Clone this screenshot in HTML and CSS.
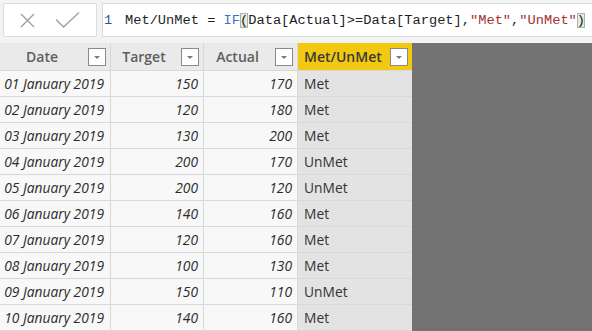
FILE: index.html
```html
<!DOCTYPE html>
<html>
<head>
<meta charset="utf-8">
<link rel="stylesheet" href="styles.css">
</head>
<body>
<div class="topbar">
  <div class="actions">
    <svg class="icon" width="15" height="15" viewBox="0 0 15 15"><path d="M1 1 L14 14 M14 1 L1 14" stroke="#a0a0a0" stroke-width="1.4" fill="none"/></svg>
    <svg class="icon" width="25" height="16" viewBox="0 0 25 16"><path d="M1 7.5 L8.5 15 L24 0.5" stroke="#a0a0a0" stroke-width="1.4" fill="none"/></svg>
  </div>
  <div class="formula">
    <span class="ln">1</span><span class="code">Met/UnMet = <span class="kw">IF</span><span class="br">(</span>Data[Actual]&gt;=Data[Target],<span class="str">"Met"</span>,<span class="str">"UnMet"</span><span class="br">)</span></span>
  </div>
</div>
<div class="main">
  <div class="grid">
    <div class="hcell"><span class="htext">Date</span><span class="dd"></span></div>
    <div class="hcell"><span class="htext">Target</span><span class="dd"></span></div>
    <div class="hcell"><span class="htext">Actual</span><span class="dd"></span></div>
    <div class="hcell sel"><span class="htext">Met/UnMet</span><span class="dd"></span></div>

    <div class="c d">01 January 2019</div><div class="c n">150</div><div class="c n">170</div><div class="c m">Met</div>
    <div class="c d">02 January 2019</div><div class="c n">120</div><div class="c n">180</div><div class="c m">Met</div>
    <div class="c d">03 January 2019</div><div class="c n">130</div><div class="c n">200</div><div class="c m">Met</div>
    <div class="c d">04 January 2019</div><div class="c n">200</div><div class="c n">170</div><div class="c m">UnMet</div>
    <div class="c d">05 January 2019</div><div class="c n">200</div><div class="c n">120</div><div class="c m">UnMet</div>
    <div class="c d">06 January 2019</div><div class="c n">140</div><div class="c n">160</div><div class="c m">Met</div>
    <div class="c d">07 January 2019</div><div class="c n">120</div><div class="c n">160</div><div class="c m">Met</div>
    <div class="c d">08 January 2019</div><div class="c n">100</div><div class="c n">130</div><div class="c m">Met</div>
    <div class="c d">09 January 2019</div><div class="c n">150</div><div class="c n">110</div><div class="c m">UnMet</div>
    <div class="c d">10 January 2019</div><div class="c n">140</div><div class="c n">160</div><div class="c m">Met</div>
  </div>
  <div class="empty"></div>
</div>
</body>
</html>
```
FILE: styles.css
```css
html, body {
  margin: 0;
  padding: 0;
  width: 592px;
  height: 331px;
  overflow: hidden;
  background: #737373;
  font-family: "Open Sans", "Noto Sans", sans-serif;
}
.topbar {
  height: 43px;
  background: #f3f3f3;
  display: flex;
  padding: 3px 0 0 3px;
  box-sizing: border-box;
  gap: 5px;
}
.actions {
  width: 94px;
  height: 34px;
  box-sizing: border-box;
  background: #fff;
  border: 1px solid #dcdcdc;
  border-radius: 2px;
  display: flex;
  align-items: center;
  padding-left: 16px;
  gap: 20px;
}
.formula {
  flex: 1;
  height: 34px;
  box-sizing: border-box;
  background: #fff;
  border: 1px solid #dcdcdc;
  border-right: none;
  display: flex;
  align-items: center;
  padding-left: 1px;
  font-family: "Liberation Mono", "DejaVu Sans Mono", monospace;
  font-size: 13.7px;
  color: #1e1e1e;
  white-space: nowrap;
}
.ln {
  color: #2b56a0;
  width: 21px;
}
.kw { color: #3d6fc6; }
.str { color: #a3312d; }
.br {
  background: #e4ebe4;
  outline: 1px solid #aab5aa;
  outline-offset: -1px;
}
.main {
  display: flex;
  height: 288px;
}
.grid {
  display: grid;
  grid-template-columns: 110px 92px 93px 114px;
  grid-template-rows: 27px repeat(10, 25px);
  gap: 1px;
  background: #d9d9d9;
  padding-bottom: 1px;
  align-content: start;
  width: 412px;
  height: 288px;
  box-sizing: border-box;
}
.empty {
  flex: 1;
  background: #737373;
}
.hcell {
  background: #eaeaea;
  display: flex;
  align-items: center;
  font-weight: 600;
  font-size: 14px;
  color: #605e5c;
  padding-right: 4px;
}
.hcell .htext {
  flex: 1;
  text-align: center;
  padding-right: 4px;
}
.hcell.sel {
  background: #f2c811;
  color: #3b3a39;
}
.hcell.sel .htext {
  text-align: left;
  padding-left: 6px;
}
.dd {
  width: 18px;
  height: 18px;
  box-sizing: border-box;
  background: #fff;
  border: 1px solid #8a8a8a;
  position: relative;
}
.dd::after {
  content: "";
  position: absolute;
  left: 5px;
  top: 7px;
  border-left: 3px solid transparent;
  border-right: 3px solid transparent;
  border-top: 3px solid #7a7a7a;
}
.c {
  background: #f8f8f8;
  display: flex;
  align-items: center;
  font-size: 13.8px;
  color: #2b2b2b;
}
.c.d {
  font-style: italic;
  justify-content: flex-end;
  padding-right: 6px;
}
.c.n {
  font-style: italic;
  justify-content: flex-end;
  padding-right: 5px;
}
.c.m {
  background: #e3e3e3;
  padding-left: 6px;
  color: #333;
}
```
